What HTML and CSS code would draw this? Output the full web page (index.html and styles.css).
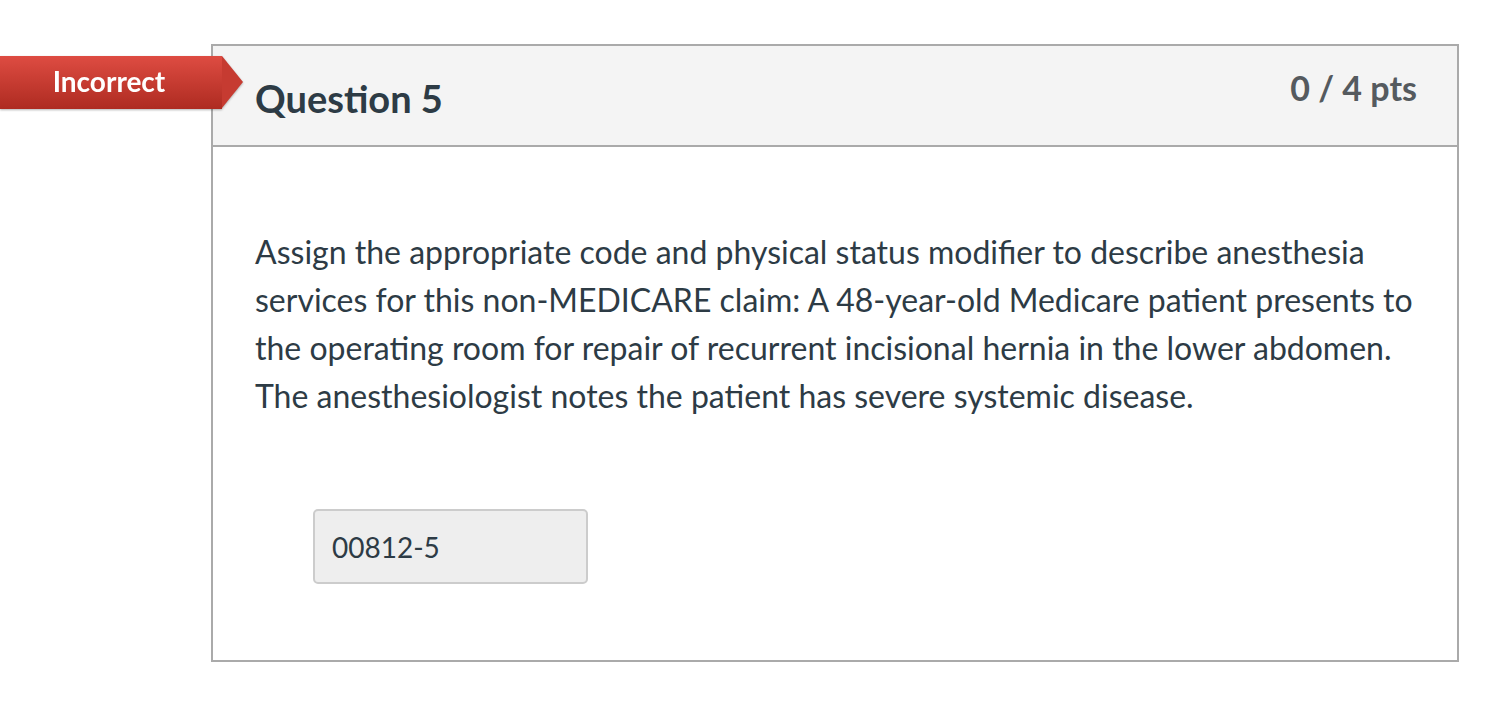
FILE: index.html
```html
<!DOCTYPE html>
<html>
<head>
<meta charset="utf-8">
<link rel="stylesheet" href="styles.css">
</head>
<body>
<div class="page">
  <div class="question">
    <div class="badge"><span class="badge-text">Incorrect</span><span class="badge-tip"></span></div>
    <div class="q-header">
      <h2 class="q-title">Question 5</h2>
      <div class="q-points">0 / 4 pts</div>
    </div>
    <div class="q-body">
      <p class="q-text">Assign the appropriate code and physical status modifier to describe anesthesia services for this non-MEDICARE claim: A 48-year-old Medicare patient presents to the operating room for repair of recurrent incisional hernia in the lower abdomen. The anesthesiologist notes the patient has severe systemic disease.</p>
      <div class="answer">00812-5</div>
    </div>
  </div>
</div>
</body>
</html>
```
FILE: styles.css
```css
html, body {
  margin: 0;
  padding: 0;
  background: #fff;
  font-family: Lato, "Open Sans", sans-serif;
  color: #2d3b45;
}
.page {
  padding: 44px 0 0 211px;
}
.question {
  position: relative;
  width: 1244px;
  height: 614px;
  border: 2px solid #aaaaaa;
}
.badge {
  position: absolute;
  left: -213px;
  top: 10px;
  display: flex;
  height: 53px;
  filter: drop-shadow(0 1px 1px rgba(0,0,0,0.3));
}
.badge-text {
  width: 222px;
  height: 53px;
  box-sizing: border-box;
  padding: 0 4px 2px 0;
  text-align: center;
  background: linear-gradient(#de4c42, #ae2b21);
  color: #fff;
  font-weight: 700;
  font-size: 28px;
  line-height: 51px;
}
.badge-tip {
  width: 0;
  height: 0;
  border-top: 26.5px solid transparent;
  border-bottom: 26.5px solid transparent;
  border-left: 21px solid #c63b31;
}
.q-header {
  display: flex;
  justify-content: space-between;
  align-items: flex-start;
  height: 99px;
  background: #f4f4f4;
  border-bottom: 2px solid #aaaaaa;
  padding: 0 40px 0 42px;
}
.q-title {
  margin: 0;
  padding-top: 30px;
  font-size: 38px;
  font-weight: 700;
  color: #2d3b45;
  line-height: 1.2;
}
.q-points {
  padding-top: 22px;
  font-size: 34px;
  font-weight: 700;
  color: #555a5e;
  line-height: 1.2;
}
.q-body {
  padding: 81px 40px 0 42px;
}
.q-text {
  margin: 0;
  font-size: 32px;
  line-height: 48px;
  color: #2d3b45;
}
.answer {
  margin: 89px 0 0 58px;
  width: 275px;
  height: 75px;
  box-sizing: border-box;
  border: 2px solid #cccccc;
  border-radius: 5px;
  background: #eeeeee;
  padding-left: 17px;
  display: flex;
  align-items: center;
  font-size: 28px;
  color: #2d3b45;
}
```
